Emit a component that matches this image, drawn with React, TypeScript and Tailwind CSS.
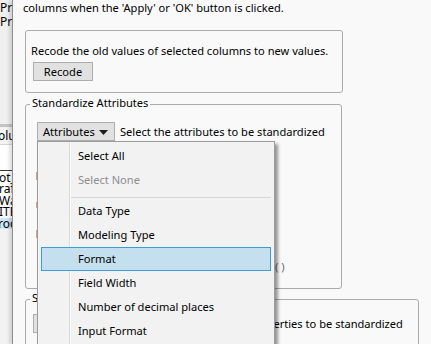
import React from 'react';

const font = "font-['Segoe_UI','Noto_Sans',sans-serif]";

function MenuItem({ label, disabled, active }: { label: string; disabled?: boolean; active?: boolean }) {
  return (
    <div
      className={`mx-[3px] h-[24px] flex items-center pl-[36px] border leading-[16px] ${
        active ? 'bg-[#c4e0ef] border-[#3d9bd5]' : 'border-transparent'
      } ${disabled ? 'text-[#8e8e8e]' : 'text-black'}`}
    >
      {label}
    </div>
  );
}

function SideStrip() {
  const rows = ['ot_', 'raf', 'Waf', 'ITE'];
  return (
    <div className="w-[12px] shrink-0 overflow-hidden whitespace-nowrap bg-[#f0f0f0] flex flex-col text-black text-[12px]">
      <div className="pt-[1px] leading-[14px] shrink-0">
        <div>Pro</div>
        <div>Pro</div>
      </div>
      <div className="h-[95px] shrink-0" />
      <div className="h-[3px] bg-[#c4c4c4] shrink-0" />
      <div className="h-[18px] shrink-0 bg-[#f3f3f3] border-b border-[#d6d6d6] leading-[18px] -ml-[2px]">olu</div>
      <div className="h-[26px] shrink-0 bg-white border-b border-[#3a3a3a]" />
      <div className="bg-white leading-[11.4px] pt-[1px] -ml-[1px] shrink-0">
        {rows.map((r) => (
          <div key={r}>{r}</div>
        ))}
        <div className="bg-[#cce4f7] -ml-[2px] pl-[1px]">roc</div>
      </div>
      <div className="flex-1 bg-[#f2f2f2]" />
    </div>
  );
}

export default function App() {
  return (
    <div className={`${font} text-[11.1px] w-[431px] h-[344px] relative overflow-hidden flex bg-[#f0f0f0]`}>
      <SideStrip />
      <div className="flex-1 bg-[#f9f9f9] border-l border-[#8f8f8f] shadow-[-3px_0_3px_rgba(0,0,0,0.12)] flex flex-col text-black">
        <div className="pl-[10px] leading-[16px] whitespace-nowrap shrink-0">
          columns when the 'Apply' or 'OK' button is clicked.
        </div>

        {/* Recode group */}
        <div className="shrink-0 ml-[12px] mt-[14px] w-[318px] h-[63px] border border-[#ababab] rounded-[3px] pl-[5px] pt-[12px]">
          <div className="leading-[16px] whitespace-nowrap">Recode the old values of selected columns to new values.</div>
          <button className="mt-[3px] ml-[2px] w-[60px] h-[19px] bg-[#e1e1e1] border border-[#adadad] leading-[16px]">
            Recode
          </button>
        </div>

        {/* Standardize Attributes group */}
        <div className="shrink-0 relative ml-[12px] mt-[11px] w-[317px] h-[185px] border border-[#ababab] rounded-[3px] pl-[11px] pt-[17px]">
          <span className="absolute -top-[10px] left-[4px] px-[2px] bg-[#f9f9f9] leading-[16px] whitespace-nowrap">
            Standardize Attributes
          </span>
          <div className="flex items-center gap-[5px] whitespace-nowrap">
            <button className="h-[19px] w-[78px] bg-[#e1e1e1] border border-[#adadad] flex items-center pl-[5px] gap-[4px] leading-[16px]">
              Attributes
              <svg width="9" height="5" viewBox="0 0 9 5" className="mt-[1px]">
                <path d="M0 0h9L4.5 5z" fill="#1e1e1e" />
              </svg>
            </button>
            <span className="leading-[16px]">Select the attributes to be standardized</span>
          </div>
          <div className="flex flex-col gap-[22px] mt-[31px] -ml-[1px]">
            <div className="w-[2px] h-[8px] bg-[#c9a397]" />
            <div className="w-[2px] h-[6px] bg-[#c9a397]" />
            <div className="w-[2px] h-[8px] bg-[#c9a397]" />
          </div>
          <div className="mt-[21px] ml-[238px] text-[#6b6b6b] leading-[16px]">( )</div>
        </div>

        {/* Standardize Properties group */}
        <div className="shrink-0 relative ml-[12px] mt-[10px] w-[394px] h-[80px] border border-[#ababab] rounded-[3px] pl-[7px] pt-[14px]">
          <span className="absolute -top-[10px] left-[4px] px-[2px] bg-[#f9f9f9] leading-[16px] whitespace-nowrap">
            Standardize Properties
          </span>
          <div className="flex items-center gap-[6px] whitespace-nowrap">
            <button className="h-[19px] w-[156px] bg-[#e1e1e1] border border-[#adadad] leading-[16px]">
              Column Properties
            </button>
            <span className="leading-[16px]">Select the properties to be standardized</span>
          </div>
        </div>
      </div>

      {/* Attributes dropdown menu */}
      <div className="absolute left-[37px] top-[141px] w-[238px] h-[220px] border border-[#9c9c9c] pt-[2px] shadow-[3px_3px_3px_rgba(0,0,0,0.4)] bg-[linear-gradient(to_right,#f2f2f2_31px,#dadada_31px,#dadada_32px,#ffffff_32px,#ffffff_33px,#f2f2f2_33px)] whitespace-nowrap">
        <MenuItem label="Select All" />
        <MenuItem label="Select None" disabled />
        <div className="h-[7px] pt-[5px] pl-[33px] pr-[3px]">
          <div className="h-[1px] bg-[#d7d7d7]" />
        </div>
        <MenuItem label="Data Type" />
        <MenuItem label="Modeling Type" />
        <MenuItem label="Format" active />
        <MenuItem label="Field Width" />
        <MenuItem label="Number of decimal places" />
        <MenuItem label="Input Format" />
      </div>
    </div>
  );
}
